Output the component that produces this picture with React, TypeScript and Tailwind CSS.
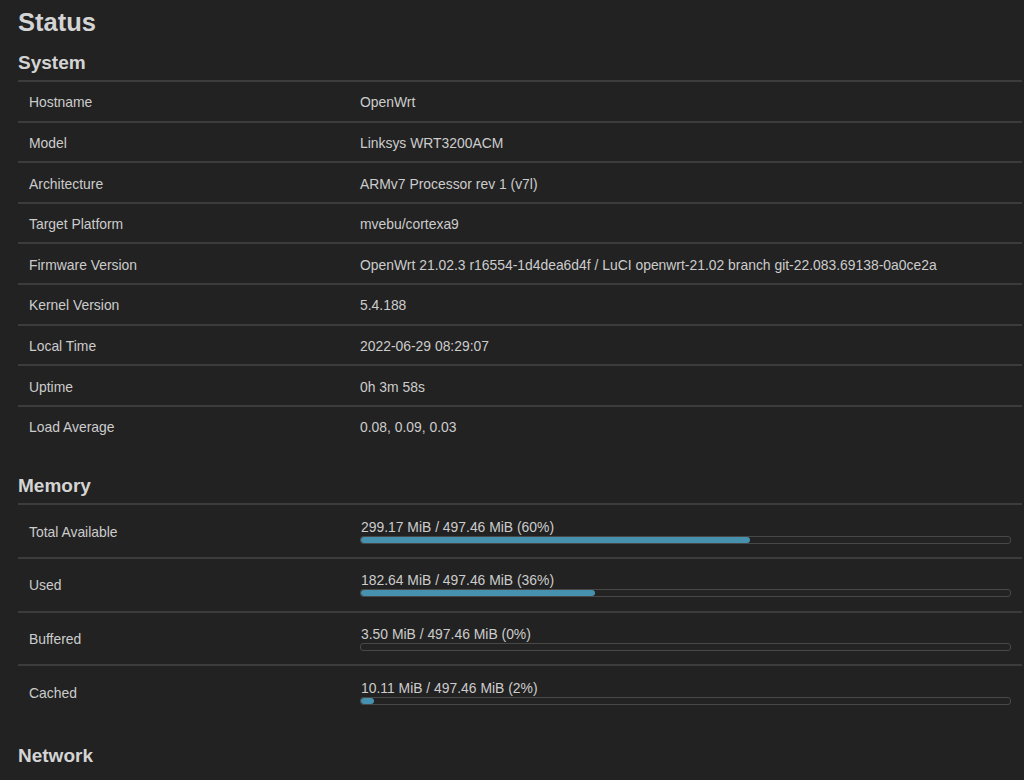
const system: [string, string][] = [
  ['Hostname', 'OpenWrt'],
  ['Model', 'Linksys WRT3200ACM'],
  ['Architecture', 'ARMv7 Processor rev 1 (v7l)'],
  ['Target Platform', 'mvebu/cortexa9'],
  ['Firmware Version', 'OpenWrt 21.02.3 r16554-1d4dea6d4f / LuCI openwrt-21.02 branch git-22.083.69138-0a0ce2a'],
  ['Kernel Version', '5.4.188'],
  ['Local Time', '2022-06-29 08:29:07'],
  ['Uptime', '0h 3m 58s'],
  ['Load Average', '0.08, 0.09, 0.03'],
]

const memory: { label: string; text: string; pct: number }[] = [
  { label: 'Total Available', text: '299.17 MiB / 497.46 MiB (60%)', pct: 60 },
  { label: 'Used', text: '182.64 MiB / 497.46 MiB (36%)', pct: 36 },
  { label: 'Buffered', text: '3.50 MiB / 497.46 MiB (0%)', pct: 0 },
  { label: 'Cached', text: '10.11 MiB / 497.46 MiB (2%)', pct: 2 },
]

function Bar({ text, pct }: { text: string; pct: number }) {
  return (
    <div className="flex flex-1 flex-col pr-[11px]">
      <span className="pl-px text-[13.9px] leading-[16px]">{text}</span>
      <div className="mt-[1px] h-[8px] rounded-[3px] border border-[#484848] bg-[#232323]">
        {/* fill */}
        <div className="h-full rounded-[3px] bg-[#4691ad]" style={{ width: `${pct}%`, minWidth: pct > 0 ? 8 : 0 }} />
      </div>
    </div>
  )
}

export default function App() {
  return (
    <div className="min-h-screen bg-[#222222] px-[18px] pr-[2px] pt-[7px] text-[#cccccc] [font-family:'Liberation_Sans',Arial,sans-serif]">
      <h2 className="text-[25.5px] font-bold leading-[30px] text-[#d4d4d4]">Status</h2>

      <h3 className="mt-[14px] mb-[5px] text-[19px] font-bold leading-[24px] text-[#d4d4d4]">System</h3>
      <div>
        {system.map(([k, v]) => (
          <div key={k} className="flex h-[40.6px] items-center border-t-2 border-[#3c3c3c] pt-[3px] text-[13.9px]">
            <div className="w-[342px] shrink-0 pl-[11px]">{k}</div>
            <div>{v}</div>
          </div>
        ))}
      </div>

      <h3 className="mt-[29px] mb-[5px] text-[19px] font-bold leading-[24px] text-[#d4d4d4]">Memory</h3>
      <div>
        {memory.map((m) => (
          <div key={m.label} className="flex h-[53.7px] items-center border-t-2 border-[#3c3c3c] text-[13.9px]">
            <div className="w-[342px] shrink-0 pl-[11px] pt-[2px]">{m.label}</div>
            <Bar text={m.text} pct={m.pct} />
          </div>
        ))}
      </div>

      <h3 className="mt-[26px] text-[19px] font-bold leading-[24px] text-[#d4d4d4]">Network</h3>
    </div>
  )
}
